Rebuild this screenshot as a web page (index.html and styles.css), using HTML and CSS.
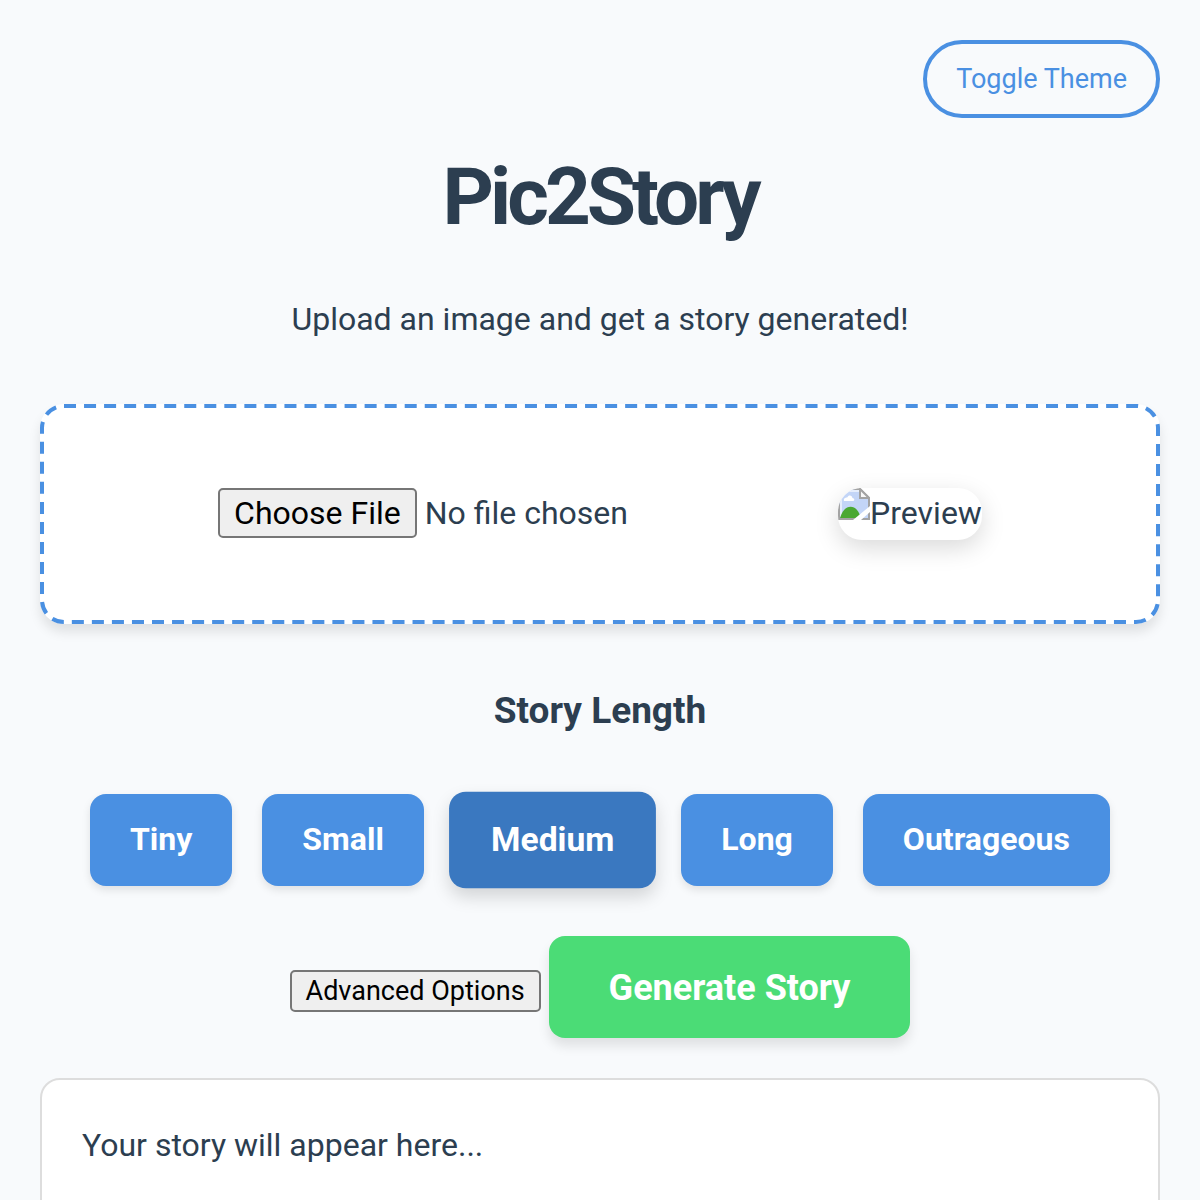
FILE: index.html
```html
<!DOCTYPE html>
<html lang="en">
<head>
    <meta charset="UTF-8">
    <meta name="viewport" content="width=device-width, initial-scale=1.0">
    <title>Pic2Story</title>
    <link rel="stylesheet" href="styles.css">
</head>
<body>
    <header>
        <button type="button" class="theme-toggle">Toggle Theme</button>
        <h1>Pic2Story</h1>
        <p>Upload an image and get a story generated!</p>
    </header>

    <main>
        <div class="upload-area">
            <!-- dashed outline -->
            <svg class="upload-outline" aria-hidden="true">
                <rect x="2" y="2" rx="22" ry="22" pathLength="2620"/>
            </svg>
            <input type="file" class="file-input" accept="image/*" aria-label="Image">
            <div class="preview">
                <svg class="preview-icon" viewBox="0 0 16 16" aria-hidden="true">
                    <path d="M0.5 0.5H11L15.5 5V15.5H0.5Z" fill="#c3d5f7" stroke="#a3a3a3"/>
                    <path d="M1.5 14.5V1.5H10.5" fill="none" stroke="#e6eefc"/>
                    <path d="M11 0.5V5H15.5Z" fill="#f8f8f8" stroke="#a3a3a3"/>
                    <path d="M3 6.5C2.6 5 4.2 4.6 4.6 4.8C5.2 3.2 7.2 3.6 7.2 5C8.4 5 8.4 6.5 7.6 6.5Z" fill="#fff"/>
                    <path d="M1 15C2 11.5 4 9.4 6.3 9.4C8.6 9.4 10.5 11.5 11.5 15Z" fill="#4aa832"/>
                    <path d="M7.5 16L16 9V12L11.5 16Z" fill="#fff"/>
                </svg>
                <span>Preview</span>
            </div>
        </div>

        <h3>Story Length</h3>
        <div class="length-options">
            <button type="button" class="length-btn">Tiny</button>
            <button type="button" class="length-btn">Small</button>
            <button type="button" class="length-btn active">Medium</button>
            <button type="button" class="length-btn">Long</button>
            <button type="button" class="length-btn">Outrageous</button>
        </div>

        <div class="actions">
            <button type="button" class="advanced-btn">Advanced Options</button>
            <button type="button" class="generate-btn">Generate Story</button>
        </div>

        <div class="story-output">Your story will appear here...</div>
    </main>

    <script>
        const lengthButtons = document.querySelectorAll(".length-btn");
        lengthButtons.forEach((button) => {
            button.addEventListener("click", () => {
                lengthButtons.forEach((b) => b.classList.remove("active"));
                button.classList.add("active");
            });
        });
    </script>
</body>
</html>
```

FILE: styles.css
```css
* {
    box-sizing: border-box;
}

body {
    font-family: Roboto, sans-serif;
    font-size: 32px;
    line-height: 50px;
    margin: 0;
    padding: 40px;
    background-color: #f8fafc;
    color: #2c3e50;
}

button {
    font-family: inherit;
    cursor: pointer;
}

header {
    display: flex;
    flex-direction: column;
    align-items: center;
    text-align: center;
}

.theme-toggle {
    align-self: flex-end;
    padding: 20px 29px;
    font-size: 27px;
    line-height: 30px;
    color: #4a90e2;
    background: transparent;
    border: 4px solid #4a90e2;
    border-radius: 40px;
}

h1 {
    margin: 15px 0 33px;
    font-size: 80px;
    line-height: 128px;
    letter-spacing: -4px;
}

header p {
    margin: 0 0 60px;
}

.upload-area {
    position: relative;
    display: flex;
    justify-content: center;
    align-items: flex-start;
    gap: 60px;
    padding: 84px 44px;
    background-color: #fff;
    border-radius: 24px;
    box-shadow: 0 8px 12px rgba(0, 0, 0, 0.1);
}

.upload-outline {
    position: absolute;
    inset: 0;
    width: 100%;
    height: 100%;
    pointer-events: none;
}

.upload-outline rect {
    width: calc(100% - 4px);
    height: calc(100% - 4px);
    fill: none;
    stroke: #4a90e2;
    stroke-width: 4px;
    stroke-dasharray: 12 8;
}

.file-input {
    width: 560px;
    font: inherit;
    color: inherit;
}

.file-input::file-selector-button {
    margin: 0 8px 0 0;
    padding: 2px 14px;
    font: inherit;
    line-height: 42px;
    color: #000;
    background-color: #efefef;
    border: 2px solid #767676;
    border-radius: 5px;
}

.preview {
    display: flex;
    align-items: flex-start;
    padding-bottom: 2px;
    overflow: hidden;
    border-radius: 24px;
    box-shadow: 0 8px 24px rgba(0, 0, 0, 0.15);
}

.preview-icon {
    width: 32px;
    height: 32px;
}

h3 {
    margin: 60px 0 56px;
    font-size: 37px;
    line-height: 54px;
    text-align: center;
}

.length-options {
    display: flex;
    flex-wrap: wrap;
    justify-content: center;
    gap: 30px;
}

.length-btn {
    padding: 25px 40px 27px;
    font-size: 32px;
    line-height: 40px;
    font-weight: bold;
    color: #fff;
    background-color: #4a90e2;
    border: none;
    border-radius: 16px;
    box-shadow: 0 4px 8px rgba(0, 0, 0, 0.1);
}

.length-btn.active {
    background-color: #3a78c0;
    box-shadow: 0 8px 16px rgba(0, 0, 0, 0.15);
    transform: scale(1.05);
}

.actions {
    display: flex;
    justify-content: center;
    align-items: baseline;
    gap: 8px;
    margin: 50px 0 40px;
}

.advanced-btn {
    padding: 2px 14px;
    font-size: 27px;
    line-height: 34px;
    color: #000;
    background-color: #efefef;
    border: 2px solid #767676;
    border-radius: 5px;
}

.generate-btn {
    padding: 31px 60px 29px;
    font-size: 36px;
    line-height: 42px;
    font-weight: bold;
    color: #fff;
    background-color: #4bdc76;
    border: none;
    border-radius: 16px;
    box-shadow: 0 8px 12px rgba(0, 0, 0, 0.1);
}

.story-output {
    min-height: 400px;
    padding: 40px;
    background-color: #fff;
    border: 2px solid #ddd;
    border-radius: 20px;
}
```
